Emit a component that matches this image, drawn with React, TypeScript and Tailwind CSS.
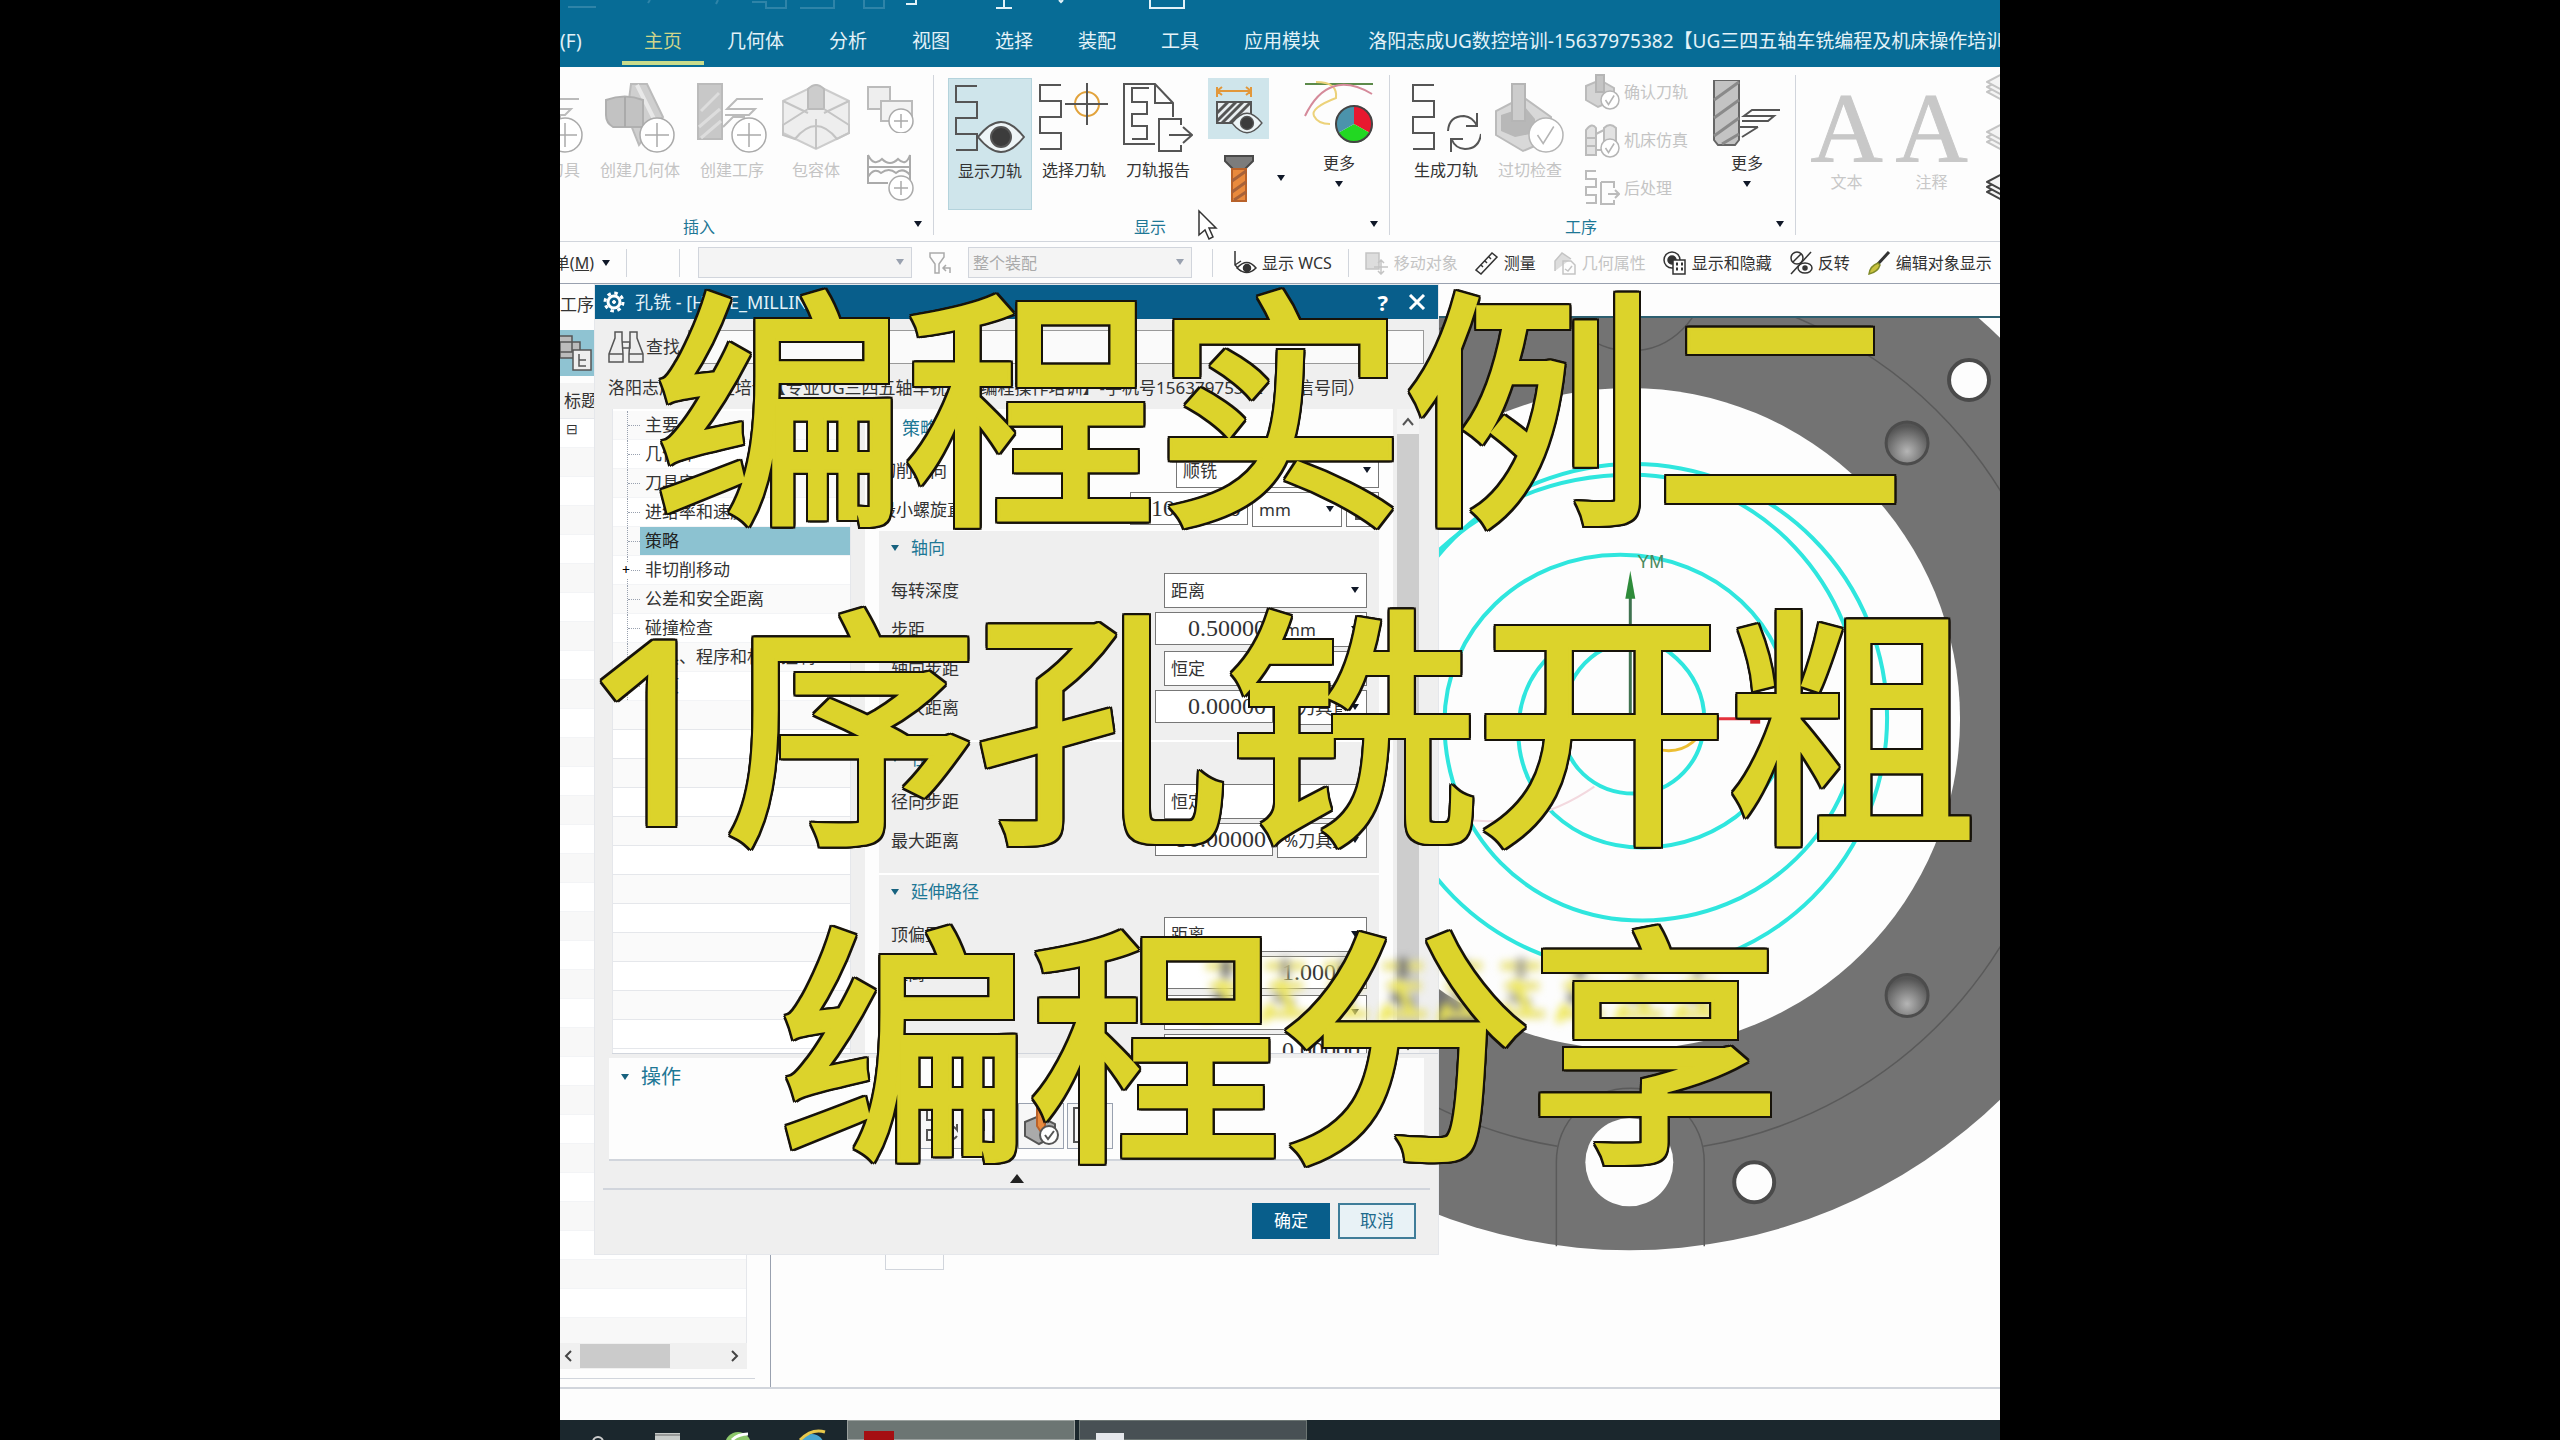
import { type ReactNode } from "react";

const tabs = ["几何体", "分析", "视图", "选择", "装配", "工具", "应用模块"];
const treeItems = ["主要", "几何体", "刀具安装", "进给率和速度", "策略", "非切削移动", "公差和安全距离", "碰撞检查", "刀具、程序和机床控制", "选项"];
const STEP = "M21 0H0V16H21V32H0V48H21V64H0";

/* ---------- 图标 ---------- */

function Icon({ w = 70, h = 70, children }: { w?: number; h?: number; children: ReactNode }) {
  return (
    <svg width={w} height={h} viewBox={`0 0 ${w} ${h}`} fill="none" stroke="#555" strokeWidth="2" className="shrink-0" aria-hidden="true">
      {children}
    </svg>
  );
}

function Down({ className = "text-gray-900" }: { className?: string }) {
  return (
    <svg width="8" height="6" viewBox="0 0 8 6" className={className} aria-hidden="true">
      <path d="M0 0H8L4 6Z" fill="currentColor" />
    </svg>
  );
}

function Plus({ x, y, r = 17 }: { x: number; y: number; r?: number }) {
  return (
    <g stroke="#aaa" strokeWidth="1.5">
      <circle cx={x} cy={y} r={r} fill="#fff" />
      <path d={`M${x - r + 5} ${y}h${2 * r - 10}M${x} ${y - r + 5}v${2 * r - 10}`} />
    </g>
  );
}

function Eye({ x, y, s = 1 }: { x: number; y: number; s?: number }) {
  return (
    <g transform={`translate(${x} ${y}) scale(${s})`}>
      <path d="M-23 0Q-11 -15 0 -15Q11 -15 23 0Q11 15 0 15Q-11 15 -23 0Z" fill="#eef5f7" stroke="#555" strokeWidth="2" />
      <circle r="10" fill="#3c3c3c" stroke="#555" />
    </g>
  );
}

function GeomIcon() {
  return (
    <Icon>
      <path d="M26 1H42L58 34L44 48L34 62L22 32Z" fill="#cfcfcf" stroke="#bbb" />
      <path d="M32 2L50 38" stroke="#e8e8e8" strokeWidth="4" />
      <path d="M1 17Q20 10 38 17V44H8Q1 40 1 32Z" fill="#c2c2c2" stroke="#b0b0b0" />
      <path d="M20 14V44" stroke="#aaa" />
      <Plus x={52} y={52} />
    </Icon>
  );
}

function OperationIcon() {
  return (
    <Icon>
      <path d="M1 1H25V56H1Z" fill="#c8c8c8" stroke="#bbb" />
      <path d="M4 28L22 10M2 44L23 26M4 55L24 38" stroke="#ddd" strokeWidth="3" />
      <path d="M66 16H40L30 26H58L52 32H28M48 34H36L26 44" stroke="#bbb" />
      <Plus x={52} y={52} />
    </Icon>
  );
}

function ContainIcon() {
  return (
    <Icon>
      <path d="M35 2L68 18V50L35 66L2 50V18Z" fill="#eee" stroke="#ccc" />
      <path d="M27 6Q35 -2 43 6V26H27Z" fill="#ccc" stroke="#bbb" />
      <path d="M27 26L2 42V52L14 56Q35 30 56 56L68 50V42L43 26M2 18L27 30M68 18L43 30M35 36V66" stroke="#c4c4c4" />
    </Icon>
  );
}

function StockIcon() {
  return (
    <Icon w={48} h={48}>
      <path d="M2 2H24V24H2Z" fill="#eee" stroke="#bbb" />
      <path d="M15 16H46V36H15Z" fill="#f2f2f2" stroke="#bbb" />
      <Plus x={35} y={36} r={12} />
    </Icon>
  );
}

function WaveIcon() {
  return (
    <Icon w={48} h={48}>
      <path d="M2 2Q8 14 16 6Q24 14 32 6Q40 14 44 2V30M2 2V30H22M2 24Q8 14 15 20Q23 14 30 20Q37 14 44 22M2 14H44" stroke="#aaa" />
      <Plus x={35} y={35} r={12} />
    </Icon>
  );
}

function ShowPathIcon() {
  return (
    <Icon>
      <path d={STEP} transform="translate(1 2)" />
      <Eye x={46} y={53} />
    </Icon>
  );
}

function SelectPathIcon() {
  return (
    <Icon>
      <path d={STEP} transform="translate(1 2)" />
      <circle cx="48" cy="21" r="12" stroke="#e2a33c" />
      <path d="M26 21H69M48 0V42" />
    </Icon>
  );
}

function ReportIcon() {
  return (
    <Icon>
      <path d="M32 61H1V1H32L50 20V34M32 1V20H50M26 5H9V19H24V31H9V43H24V56H9" />
      <path d="M58 42V36H36V68H58V62M46 52H69M60 44L69 52L60 60" />
    </Icon>
  );
}

function HatchIcon() {
  return (
    <Icon w={50} h={52}>
      <path d="M3 4V14M37 4V14M3 8H37M3 8l5 -4M3 8l5 4M37 8l-5 -4M37 8l-5 4" stroke="#e2973a" />
      <path d="M3 19H37V40H3Z" fill="#e9eef0" />
      <path d="M3 30L14 19M3 38L22 19M8 40L29 19M16 40L37 19" strokeWidth="3" />
      <Eye x={33} y={40} s={0.65} />
    </Icon>
  );
}

function ToolIcon() {
  return (
    <Icon w={30} h={48}>
      <path d="M1 1H29V6L21 14H9L1 6Z" fill="#7c7c7c" stroke="#4a4a4a" />
      <path d="M8 14H22V46H8Z" fill="#e98a3d" stroke="#b9622a" />
      <path d="M8 26L22 16M8 37L22 27M10 45L22 37" stroke="#a7623a" strokeWidth="3" />
    </Icon>
  );
}

function MoreViewIcon() {
  return (
    <Icon>
      <path d="M1 4H69" stroke="#5c8a4a" />
      <path d="M12 2Q34 2 32 18Q6 28 10 36Q14 44 26 44" stroke="#ecd27a" />
      <path d="M1 36Q24 -12 68 14" stroke="#d58a9a" />
      <path d="M50 44V26A18 18 0 0 1 66 53Z" fill="#e8182f" stroke="none" />
      <path d="M50 44L66 53A18 18 0 0 1 34 53Z" fill="#22d822" stroke="none" />
      <path d="M50 44L34 53A18 18 0 0 1 50 26Z" fill="#4b93ab" stroke="none" />
      <circle cx="50" cy="44" r="18" stroke="#444" />
    </Icon>
  );
}

function GenerateIcon() {
  return (
    <Icon>
      <path d={STEP} transform="translate(2 2)" />
      <path d="M37 48Q38 33 53 33Q62 34 66 43M66 30V43H55M70 51Q68 66 54 66Q44 65 41 57M40 69V56H52" />
    </Icon>
  );
}

function Check({ x, y, r }: { x: number; y: number; r: number }) {
  return (
    <g stroke="#b5b5b5" strokeWidth="1.5">
      <circle cx={x} cy={y} r={r} fill="#fff" />
      <path d={`M${x - r / 2} ${y}l${r / 3} ${r / 2}l${r / 1.6} ${-r}`} />
    </g>
  );
}

function GougeIcon() {
  return (
    <Icon>
      <path d="M28 14L56 34V56L28 68L1 52V28Z" fill="#d8d8d8" stroke="#bbb" />
      <path d="M6 32L30 24L40 36V50L20 54L6 48Z" fill="#b8b8b8" stroke="none" />
      <path d="M17 1H30V38H17Z" fill="#ccc" stroke="#b5b5b5" />
      <Check x={51} y={52} r={17} />
    </Icon>
  );
}

function VerifyIcon() {
  return (
    <Icon w={36} h={36}>
      <path d="M16 6L30 14V26L14 33L2 26V12Z" fill="#d4d4d4" stroke="#bbb" />
      <path d="M12 1H20V18H12Z" fill="#c4c4c4" stroke="#b5b5b5" />
      <Check x={26} y={26} r={9} />
    </Icon>
  );
}

function MachineIcon() {
  return (
    <Icon w={36} h={36}>
      <path d="M2 33V8Q8 0 12 6V33ZM20 22V6Q26 0 32 6V24M2 16H12M2 24H12M12 12L20 8M12 28H20" fill="#e2e2e2" stroke="#bbb" />
      <Check x={26} y={26} r={9} />
    </Icon>
  );
}

function PostIcon() {
  return (
    <Icon w={36} h={36}>
      <path d="M12 1H2V9H12V17H2V25H12V33H2M17 12H30V18M17 12V34H30V30M24 24H35M31 20L35 24L31 28" stroke="#bbb" />
    </Icon>
  );
}

function MillIcon() {
  return (
    <Icon>
      <path d="M2 0H27V60L23 65H6L2 60Z" fill="#c3c3c3" stroke="#666" />
      <path d="M2 20L27 2M2 38L27 20M2 56L27 38M10 64L27 54" stroke="#8a8a8a" strokeWidth="3" />
      <path d="M68 30H40L32 36H62L56 41H30M46 47H28M46 47L30 57" />
    </Icon>
  );
}

function Layers({ color }: { color: string }) {
  return (
    <svg width="44" height="34" viewBox="0 0 44 34" fill="#f4f4f4" stroke={color} strokeWidth="2" className="shrink-0" aria-hidden="true">
      <path d="M1 22L20 12L40 22L20 32Z" />
      <path d="M1 17L20 7L40 17L20 27Z" />
      <path d="M1 12L20 2L40 12L20 22Z" />
    </svg>
  );
}

/* ---------- 功能区 ---------- */

function RibbonButton({ icon, label, active, disabled, wide }: { icon: ReactNode; label: string; active?: boolean; disabled?: boolean; wide?: boolean }) {
  return (
    <button
      className={`flex h-[132px] shrink-0 flex-col items-center pt-[5px] ${wide ? "w-[100px]" : "w-[84px]"} ${
        active ? "border border-[#b4d3dc] bg-[#cfe5eb]" : ""
      } ${disabled ? "text-[#c4c4c4]" : "text-[#333]"}`}
    >
      <span className="flex h-[70px] items-center">{icon}</span>
      <span className="mt-[7px] text-base leading-5 whitespace-nowrap">{label}</span>
    </button>
  );
}

function MoreButton({ icon }: { icon: ReactNode }) {
  return (
    <button className="flex h-[132px] w-[84px] shrink-0 flex-col items-center pt-[2px] text-[#333]">
      {icon}
      <span className="mt-[3px] text-base leading-5">更多</span>
      <span className="mt-2">
        <Down />
      </span>
    </button>
  );
}

function RibbonGroup({ label, width, pad = "pr-6", children }: { label: string; width: string; pad?: string; children: ReactNode }) {
  return (
    <section className={`flex shrink-0 flex-col ${width}`}>
      <div className="flex h-[146px] pt-[11px]">{children}</div>
      <div className={`relative flex h-7 items-center justify-center text-base text-[#1d7795] ${pad}`}>
        {label}
        {label && (
          <span className="absolute top-2 right-3">
            <Down />
          </span>
        )}
      </div>
    </section>
  );
}

function Divider() {
  return <div className="-ml-px mt-2 h-[160px] w-px shrink-0 bg-gray-300" />;
}

function Ribbon() {
  return (
    <div className="flex h-[175px] shrink-0 overflow-hidden border-b border-gray-300 bg-[#fdfdfd]">
      <RibbonGroup label="插入" width="w-[374px]" pad="pr-24">
        <div className="flex w-full justify-end">
          <RibbonButton icon={<OperationIcon />} label="创建刀具" disabled />
          <RibbonButton icon={<GeomIcon />} label="创建几何体" disabled wide />
          <RibbonButton icon={<OperationIcon />} label="创建工序" disabled />
          <RibbonButton icon={<ContainIcon />} label="包容体" disabled />
          <div className="flex w-[76px] shrink-0 flex-col items-start gap-5 pl-2 pt-[7px]">
            <button aria-label="毛坯"><StockIcon /></button>
            <button aria-label="曲面"><WaveIcon /></button>
          </div>
        </div>
      </RibbonGroup>
      <Divider />
      <RibbonGroup label="显示" width="w-[456px]">
        <div className="flex w-full pl-[14px]">
          <RibbonButton icon={<ShowPathIcon />} label="显示刀轨" active />
          <RibbonButton icon={<SelectPathIcon />} label="选择刀轨" />
          <RibbonButton icon={<ReportIcon />} label="刀轨报告" />
          <div className="ml-2 flex w-[61px] flex-col items-center gap-4">
            <button aria-label="显示切削" className="flex h-[61px] w-full items-center justify-center bg-[#cfe5eb]"><HatchIcon /></button>
            <button aria-label="显示刀具"><ToolIcon /></button>
          </div>
          <div className="flex w-7 items-center justify-start pt-16 pl-2">
            <Down />
          </div>
          <MoreButton icon={<MoreViewIcon />} />
        </div>
      </RibbonGroup>
      <Divider />
      <RibbonGroup label="工序" width="w-[406px]">
        <div className="flex w-full pl-[14px]">
          <RibbonButton icon={<GenerateIcon />} label="生成刀轨" />
          <RibbonButton icon={<GougeIcon />} label="过切检查" disabled />
          <div className="-mt-1 ml-3 flex w-[121px] flex-col gap-3 text-base text-[#c4c4c4]">
            <button className="flex items-center gap-1"><VerifyIcon />确认刀轨</button>
            <button className="flex items-center gap-1"><MachineIcon />机床仿真</button>
            <button className="flex items-center gap-1"><PostIcon />后处理</button>
          </div>
          <MoreButton icon={<MillIcon />} />
        </div>
      </RibbonGroup>
      <Divider />
      <RibbonGroup label="" width="w-[230px]">
        <div className="flex pl-2">
          {["文本", "注释"].map((t) => (
            <button key={t} className="flex w-[85px] flex-col items-center pt-2 text-[#c8c8c8]">
              <span className="font-['Liberation_Serif'] text-[100px] leading-[86px] [-webkit-text-stroke:1px_#c8c8c8]">A</span>
              <span className="text-base leading-5">{t}</span>
            </button>
          ))}
          <div className="-mt-2 ml-3 flex flex-col gap-4">
            <Layers color="#c4c4c4" />
            <Layers color="#c4c4c4" />
            <Layers color="#444" />
          </div>
        </div>
      </RibbonGroup>
    </div>
  );
}

function Header() {
  return (
    <header className="h-[67px] shrink-0 overflow-hidden bg-[#076c96] text-[19px] whitespace-nowrap text-[#e3f2f8]">
      <div className="flex h-[10px] items-start">
        <svg width="640" height="10" viewBox="0 0 640 10" fill="none" stroke="#e3f2f8" strokeWidth="2" aria-hidden="true">
          <path d="M346 4H356V0M436 8H452M444 8V0M499 0L501 2L503 0M590 0V8H624V0" />
          <path d="M8 7H36M88 3L90 0M156 4L158 0M192 2H206V8H226V0M240 8H274V0M304 0V8H324V0" stroke="#2f84a8" />
        </svg>
      </div>
      <nav className="flex h-[55px]">
        <div className="flex h-full w-[62px] shrink-0 items-center pt-2">(F)</div>
        <button className="flex h-full shrink-0 items-center border-b-4 border-[#c9dc8b] px-[22px] pt-3 text-[#cfd58a]">主页</button>
        {tabs.map((t) => (
          <button key={t} className="ml-px flex h-full shrink-0 items-center px-[22px] pt-2">
            {t}
          </button>
        ))}
        <div className="flex h-full items-center pl-[26px] pt-2">洛阳志成UG数控培训-15637975382【UG三四五轴车铣编程及机床操作培训】</div>
      </nav>
    </header>
  );
}

/* ---------- 选择条 ---------- */

function ToolButton({ icon, label, disabled }: { icon: ReactNode; label: string; disabled?: boolean }) {
  return (
    <button className={`flex shrink-0 items-center gap-[5px] ${disabled ? "text-[#c4c4c4]" : "text-[#333]"}`}>
      <svg width="24" height="24" viewBox="0 0 24 24" fill="none" stroke="currentColor" strokeWidth="1.5" aria-hidden="true">
        {icon}
      </svg>
      {label}
    </button>
  );
}

function SelectionBar() {
  return (
    <div className="flex h-[42px] shrink-0 items-center overflow-hidden border-b border-gray-400 bg-[#fdfdfd] text-base whitespace-nowrap text-[#333]">
      <div className="flex w-[34px] shrink-0 justify-end">
        <span>菜单(<u>M</u>)</span>
      </div>
      <span className="ml-2"><Down /></span>
      <div className="ml-[16px] h-7 w-px shrink-0 bg-gray-300" />
      <div className="ml-[52px] h-7 w-px shrink-0 bg-gray-300" />
      <label className="relative ml-[18px] shrink-0">
        <select aria-label="类型过滤器" className="h-[31px] w-[214px] appearance-none border border-gray-300 bg-[#f4f4f4]" />
        <span className="absolute top-3 right-2"><Down className="text-gray-400" /></span>
      </label>
      <svg width="24" height="24" viewBox="0 0 24 24" fill="none" stroke="#aaa" strokeWidth="1.5" className="ml-4 shrink-0" aria-hidden="true">
        <path d="M2 2H16V6L11 13V22H7V13L2 6ZM22 22V17H15M18 14L15 17L18 20" />
      </svg>
      <label className="relative ml-4 shrink-0">
        <select aria-label="选择范围" className="h-[31px] w-[224px] appearance-none border border-gray-300 bg-[#f4f4f4] pl-1 text-[#aaa]">
          <option>整个装配</option>
        </select>
        <span className="absolute top-3 right-2"><Down className="text-gray-400" /></span>
      </label>
      <div className="mx-5 h-7 w-px shrink-0 bg-gray-300" />
      <ToolButton label="显示 WCS" icon={<><path d="M2 0V14L8 20M2 14L8 10" /><path d="M4 17Q14 6 23 17Q14 26 4 17Z" fill="#fff" /><circle cx="14" cy="17" r="3.5" fill="#333" /></>} />
      <div className="mx-4 h-7 w-px shrink-0 bg-gray-300" />
      <div className="flex gap-[17px]">
        <ToolButton disabled label="移动对象" icon={<><path d="M1 2H14V18H1Z" fill="#ddd" /><path d="M9 16H23M16 9V23M13 12L16 9L19 12M13 20L16 23L19 20" /></>} />
        <ToolButton label="测量" icon={<path d="M1 19L17 2L22 6L6 23ZM6 14l2 2M10 10l2 2M14 6l2 2" />} />
        <ToolButton disabled label="几何属性" icon={<><path d="M2 20V10L9 2L18 8" fill="#ddd" /><path d="M10 10H18L22 14V23H10ZM12 18l3 2 4-5" /></>} />
        <ToolButton label="显示和隐藏" icon={<><circle cx="9" cy="9" r="8" /><circle cx="9" cy="9" r="4" fill="#333" /><path d="M10 9H22V23H10Z" fill="#fff" /><path d="M13 13h2M18 13h2M13 18h2M18 18h2" strokeWidth="3" /></>} />
        <ToolButton label="反转" icon={<><path d="M22 1L2 23" /><circle cx="8" cy="7" r="6" /><path d="M4 11L12 3" /><ellipse cx="16" cy="17" rx="7" ry="5" /><circle cx="16" cy="17" r="2" fill="#333" /></>} />
        <ToolButton label="编辑对象显示" icon={<><path d="M22 1L10 14" strokeWidth="3" /><path d="M11 12Q3 15 2 23Q11 21 13 14Z" fill="#c9c23e" stroke="#7f8a2a" /></>} />
      </div>
    </div>
  );
}

/* ---------- 导航器和视图 ---------- */

function Navigator() {
  return (
    <aside className="flex w-[211px] shrink-0 flex-col overflow-hidden border-r border-gray-400 bg-[#fdfdfd]">
      <div className="flex h-[46px] items-center pb-1 text-[17px] text-[#333]">工序导航器</div>
      <div className="flex h-[46px] w-[187px] bg-[#8fc3d2]">
        <svg width="34" height="46" viewBox="0 0 34 46" fill="#eee" stroke="#555" strokeWidth="1.5" aria-hidden="true">
          <path d="M-4 6H12V22H-4ZM0 12H20V28H0Z" fill="#bbb" />
          <path d="M13 20H31V40H13Z" />
          <path d="M19 24V36H26M19 30H26" />
        </svg>
      </div>
      <div className="mt-[7px] flex h-9 w-[187px] items-center border-b border-gray-200 bg-[#f3f3f3] pl-1 text-[17px] text-[#333]">标题</div>
      <div className="min-h-0 w-[187px] flex-1 overflow-hidden border-r border-gray-200">
        {Array.from({ length: 32 }, (_, i) => (
          <div key={i} className="h-[29px] border-b border-gray-100 pl-[6px] text-sm text-[#333] odd:bg-white even:bg-[#f8f8f8]">
            {i === 0 && "⊟"}
          </div>
        ))}
      </div>
      <div className="flex h-[26px] w-[187px] shrink-0 items-center gap-1 bg-[#f0f0f0] px-1">
        <svg width="8" height="12" viewBox="0 0 8 12" fill="none" stroke="#444" strokeWidth="2" aria-hidden="true"><path d="M7 1L2 6L7 11" /></svg>
        <div className="ml-1 h-6 w-[90px] bg-[#cbcbcb]" />
        <svg width="8" height="12" viewBox="0 0 8 12" fill="none" stroke="#444" strokeWidth="2" className="ml-auto mr-1" aria-hidden="true"><path d="M1 1L6 6L1 11" /></svg>
      </div>
      <div className="h-[10px] w-[195px] shrink-0 border-b border-gray-300" />
      <div className="h-2 shrink-0" />
    </aside>
  );
}

function Viewport() {
  return (
    <div className="flex min-w-0 flex-1 flex-col bg-[#fdfdfd] pt-[32px]">
      <svg viewBox="770 317 1230 1071" preserveAspectRatio="xMinYMin slice" className="min-h-0 w-full flex-1 border-t-2 border-[#2d5f70]" fill="none" aria-label="零件视图">
        <defs>
          <radialGradient id="cone" cx="0.5" cy="0.7" r="0.6">
            <stop offset="0" stopColor="#b5b5b5" />
            <stop offset="1" stopColor="#555" />
          </radialGradient>
        </defs>
        <circle cx="1629" cy="718" r="532" fill="#737373" />
        <g stroke="#5a5a5a" strokeWidth="1.5">
          <path d="M1703 1146A434 434 0 0 0 1703 290M1557 1146A434 434 0 0 1 1557 290" />
          <path d="M1556 1246V1162A74 74 0 0 1 1704 1162V1246M1556 190V276A74 74 0 0 0 1704 276V190" />
        </g>
        <circle cx="1629" cy="718" r="331" fill="#fdfdfd" />
        <circle cx="1629" cy="1162" r="44" fill="#fdfdfd" />
        <g fill="#fdfdfd" stroke="#4a4a4a" strokeWidth="4">
          <circle cx="1969" cy="379" r="20" />
          <circle cx="1754" cy="1182" r="20" />
        </g>
        <g fill="url(#cone)" stroke="#4c4c4c" strokeWidth="3">
          <circle cx="1907" cy="442" r="21" />
          <circle cx="1907" cy="995" r="21" />
        </g>
        {/* 螺旋刀轨 */}
        <g stroke="#2fe6de" strokeWidth="4">
          <circle cx="1633" cy="717" r="254" />
          <path d="M1438 550Q1520 474 1632 474C1762 474 1860 590 1860 706C1860 826 1762 920 1642 920C1528 920 1444 832 1444 722C1444 630 1520 554 1620 554C1716 554 1790 626 1790 710C1790 788 1722 847 1642 847C1572 847 1518 796 1518 732C1518 676 1556 632 1609 632C1662 632 1704 672 1704 718C1704 762 1672 793 1634 793C1594 793 1562 764 1562 724C1562 672 1596 640 1640 640" />
        </g>
        <path d="M1457 818Q1530 830 1594 786" stroke="#f3d9df" strokeWidth="2" />
        <path d="M1632 720A37 36 0 0 0 1705 720" stroke="#ecbe32" strokeWidth="3" />
        <path d="M1630 718V594" stroke="#3f7350" strokeWidth="3" />
        <path d="M1630 570L1635 598H1625Z" fill="#2e8b3a" />
        <path d="M1630 718H1752" stroke="#e4323c" strokeWidth="3" />
        <path d="M1750 713h10v10h-10z" fill="#d3242c" />
        <path d="M1625 714h10v9h-10z" fill="#0a2a9a" />
        <text x="1637" y="567" fontSize="18" fill="#4b8a5c" className="font-['Liberation_Sans']">YM</text>
      </svg>
    </div>
  );
}

/* ---------- 孔铣对话框 ---------- */

function Combo({ label, value, width }: { label: string; value: string; width: string }) {
  return (
    <span className="relative flex shrink-0">
      <select aria-label={label} className={`h-[35px] appearance-none border border-[#777] bg-white pr-6 pl-[6px] text-[17px] text-[#333] ${width}`}>
        <option>{value}</option>
      </select>
      <span className="pointer-events-none absolute top-[14px] right-2"><Down /></span>
    </span>
  );
}

function NumberBox({ label, value, width }: { label: string; value: string; width: string }) {
  return (
    <input
      aria-label={label}
      defaultValue={value}
      className={`h-[33px] shrink-0 border border-[#777] bg-white px-[6px] text-right font-['Liberation_Serif'] text-2xl text-[#333] ${width}`}
    />
  );
}

function Row({ label, children }: { label: string; children: ReactNode }) {
  return (
    <div className="flex h-[39px] items-start justify-between gap-2 px-3">
      <span className="leading-[35px] text-[#333]">{label}</span>
      <div className="flex items-start gap-1">{children}</div>
    </div>
  );
}

function Section({ title, children }: { title: string; children: ReactNode }) {
  return (
    <section className="border-b-2 border-white bg-[#efefef] pb-[11px]">
      <h3 className="mb-2 flex h-[34px] items-center gap-3 pl-3 text-[#1d7795]">
        <Down className="text-[#17627f]" />
        {title}
      </h3>
      {children}
    </section>
  );
}

function HoleMillingDialog() {
  return (
    <div role="dialog" aria-label="孔铣" className="absolute top-0 left-[34px] w-[845px] border border-gray-200 bg-[#efefef] text-[17px] whitespace-nowrap">
      <div className="flex h-[34px] items-center bg-[#085e8b] pr-3 pl-2 text-lg text-[#e3f2f8]">
        <svg width="22" height="22" viewBox="0 0 22 22" fill="none" stroke="#fff" aria-hidden="true">
          <circle cx="11" cy="11" r="6" strokeWidth="3" />
          <circle cx="11" cy="11" r="9" strokeWidth="3" strokeDasharray="3.5 3.57" />
          <circle cx="11" cy="11" r="1.5" fill="#fff" />
        </svg>
        <span className="ml-[10px]">孔铣 - [HOLE_MILLING]</span>
        <button className="ml-auto text-[22px] font-bold text-white">?</button>
        <button aria-label="关闭" className="ml-5">
          <svg width="18" height="16" viewBox="0 0 18 16" stroke="#fff" strokeWidth="3" aria-hidden="true"><path d="M2 1L16 15M16 1L2 15" /></svg>
        </button>
      </div>
      <div className="flex h-[55px] items-center pr-[14px] pl-[13px]">
        <svg width="36" height="34" viewBox="0 0 36 34" fill="#eee" stroke="#555" strokeWidth="1.5" aria-hidden="true">
          <path d="M7 2H14V10L15 24V32H1V24L7 8ZM22 2H29V8L35 24V32H21V24L22 10ZM1 24H15M21 24H35M14 12H22V18H14" />
        </svg>
        <label htmlFor="find" className="ml-[2px] text-[#333]">查找</label>
        <input id="find" className="ml-2 h-[34px] min-w-0 flex-1 border border-[#999] bg-[#fafafa] px-2" />
      </div>
      <p className="h-[35px] overflow-hidden pl-[13px] leading-7 text-[#333]">洛阳志成UG数控培训【专业UG三四五轴车铣数控编程操作培训】-手机号15637975382（微信号同）</p>
      <div className="ml-[17px] flex h-[645px] overflow-hidden border-b border-gray-300">
        <ul className="w-[239px] shrink-0 border-x border-gray-200 bg-white pt-[2px]">
          {treeItems.map((t, i) => (
            <li key={t} className={`relative flex h-[29px] items-center border-b border-gray-100 ${i % 2 ? "bg-white" : "bg-[#fafafa]"}`}>
              <span className="ml-[14px] h-full shrink-0 border-l border-dotted border-gray-400" />
              <span className="w-3 shrink-0 border-t border-dotted border-gray-400" />
              {i === 5 && <span className="absolute left-[9px] bg-white text-sm leading-4">+</span>}
              <span className={`h-full flex-1 overflow-hidden pl-[5px] leading-7 ${i === 4 ? "bg-[#8cc2d1] text-[#222]" : "text-[#333]"}`}>{t}</span>
            </li>
          ))}
          {Array.from({ length: 12 }, (_, i) => (
            <li key={i} className="h-[29px] border-b border-gray-200 odd:bg-[#fafafa]" />
          ))}
        </ul>
        <div className="ml-[14px] w-[528px] shrink-0 bg-[#fdfdfd] pr-[14px] pl-[14px]">
          <h3 className="flex h-[38px] items-center gap-3 pl-[3px] text-lg text-[#1d7795]">
            <Down className="text-[#17627f]" />
            策略
          </h3>
          <div className="-mx-3 pt-[6px]">
            <Row label="切削方向"><Combo label="切削方向" value="顺铣" width="w-[203px]" /></Row>
            <Row label="最小螺旋直径">
              <NumberBox label="最小螺旋直径" value="10.00000" width="w-[118px]" />
              <Combo label="最小螺旋直径单位" value="mm" width="w-[90px]" />
              <button aria-label="公式" className="flex h-[35px] w-[33px] items-center justify-center border border-[#777] bg-white">
                <span className="h-5 w-4 border-2 border-[#555]" />
              </button>
            </Row>
          </div>
          <Section title="轴向">
            <Row label="每转深度"><Combo label="每转深度" value="距离" width="w-[203px]" /></Row>
            <Row label="步距"><NumberBox label="步距" value="0.50000" width="w-[118px]" /><Combo label="步距单位" value="mm" width="w-[90px]" /></Row>
            <Row label="轴向步距"><Combo label="轴向步距" value="恒定" width="w-[203px]" /></Row>
            <Row label="最大距离"><NumberBox label="轴向最大距离" value="0.00000" width="w-[118px]" /><Combo label="轴向最大距离单位" value="%刀具直径" width="w-[90px]" /></Row>
          </Section>
          <Section title="径向">
            <Row label="径向步距"><Combo label="径向步距" value="恒定" width="w-[203px]" /></Row>
            <Row label="最大距离"><NumberBox label="径向最大距离" value="50.00000" width="w-[118px]" /><Combo label="径向最大距离单位" value="%刀具直径" width="w-[90px]" /></Row>
          </Section>
          <Section title="延伸路径">
            <Row label="顶偏置"><Combo label="顶偏置" value="距离" width="w-[203px]" /></Row>
            <Row label="距离"><NumberBox label="顶距离" value="1.00000" width="w-[203px]" /></Row>
            <Row label="底偏置"><Combo label="底偏置" value="距离" width="w-[203px]" /></Row>
            <Row label="距离"><NumberBox label="底距离" value="0.00000" width="w-[203px]" /></Row>
          </Section>
        </div>
        <div className="ml-1 flex w-[22px] shrink-0 flex-col items-center bg-[#f4f4f4]">
          <svg width="22" height="25" viewBox="0 0 22 25" fill="none" stroke="#555" strokeWidth="2" aria-hidden="true"><path d="M6 16L11 10L16 16" /></svg>
          <div className="w-full flex-1 bg-[#cdcdcd]" />
          <svg width="22" height="14" viewBox="0 0 22 14" fill="none" stroke="#555" strokeWidth="2" aria-hidden="true"><path d="M6 4L11 10L16 4" /></svg>
        </div>
      </div>
      <div className="mx-[14px] mt-1 h-[103px] border-b-2 border-gray-300 bg-[#fdfdfd]">
        <h3 className="flex h-[38px] items-center gap-3 pl-3 text-xl text-[#1d7795]">
          <Down className="text-[#17627f]" />
          操作
        </h3>
        <div className="mt-[7px] flex justify-center gap-[3px]">
          {[0, 1, 2, 3].map((i) => (
            <button key={i} aria-label={["生成", "重播", "确认", "列表"][i]} className="flex h-[46px] w-[46px] items-center justify-center border border-gray-400 bg-[#f7f7f7]">
              <Icon w={40} h={40}>
                {i === 0 && <path d="M12 4H4V14H12V24H4V34H12M20 24Q28 16 34 24V18M34 30Q28 38 20 30V36" />}
                {i === 1 && <path d="M12 4H4V14H12V24H4V34H12M34 20Q20 20 22 34H34" />}
                {i === 2 && (
                  <>
                    <path d="M18 10L34 18V30L18 38L4 30V16Z" fill="#aaa" />
                    <path d="M16 0H24V20L20 26L16 20Z" fill="#e98a3d" stroke="#b9622a" />
                    <circle cx="28" cy="29" r="9" fill="#fff" />
                    <path d="M24 29L27 33L33 25" />
                  </>
                )}
                {i === 3 && <path d="M34 2H4V36H34M26 8H12V16H22V22H12V30H24" />}
              </Icon>
            </button>
          ))}
        </div>
      </div>
      <div className="mx-2 flex h-[29px] items-center justify-center border-b-2 border-gray-300 pt-2">
        <svg width="14" height="9" viewBox="0 0 14 9" aria-hidden="true"><path d="M7 0L14 9H0Z" fill="#222" /></svg>
      </div>
      <div className="flex h-[64px] justify-end gap-2 pt-[13px] pr-[22px] text-[17px]">
        <button className="h-9 w-[78px] bg-[#085e8b] text-white">确定</button>
        <button className="h-9 w-[78px] border-2 border-[#3f7d99] bg-[#e8f2f6] text-[#1d6a8c]">取消</button>
      </div>
    </div>
  );
}

/* ---------- 字幕 ---------- */

function Watermark() {
  const cells = [0, 1, 2, 3, 4, 5, 6, 7, 8];
  return (
    <svg width="550" height="90" viewBox="0 0 550 90" fill="none" className="absolute top-[944px] left-[632px] blur-[4px]" aria-hidden="true">
      {cells.map((i) => (
        <g key={i} transform={`translate(${i * 59 + 8} 8)`}>
          <path d="M6 14H46M10 34H44M4 62H50" stroke="#e8e070" strokeWidth="8" />
          <path d="M26 6V26M14 44L36 52" stroke={i % 3 === 0 ? "#777" : "#aaa796"} strokeWidth="9" />
          <path d="M20 28L34 62M12 52L4 70" stroke="#efe84e" strokeWidth="7" />
        </g>
      ))}
    </svg>
  );
}

function Caption() {
  return (
    <div className="pointer-events-none absolute inset-x-0 top-[249px] flex flex-col items-center text-[250px] leading-[318px] whitespace-nowrap text-[#dcd32b] [-webkit-text-stroke:6px_#dcd32b] [filter:drop-shadow(2px_0_0_#17130a)_drop-shadow(-2px_0_0_#17130a)_drop-shadow(0_2px_0_#17130a)_drop-shadow(0_-2px_0_#17130a)] [paint-order:stroke_fill]">
      <p>编程实例二</p>
      <p>1序孔铣开粗</p>
      <p>编程分享</p>
    </div>
  );
}

function Taskbar() {
  return (
    <footer className="flex h-5 shrink-0 overflow-hidden bg-[#1b272d]">
      <svg width="287" height="20" viewBox="0 0 287 20" fill="none" className="shrink-0" aria-hidden="true">
        <circle cx="38" cy="22" r="5" stroke="#ccc" strokeWidth="2" />
        <path d="M95 13H120V20H95Z" fill="#c8ccca" />
        <path d="M95 15H120" stroke="#666" />
        <circle cx="178" cy="25" r="13" fill="#8cc76a" />
        <path d="M172 20Q178 14 188 14" stroke="#fff" strokeWidth="3" />
        <circle cx="252" cy="26" r="12" fill="#4aa6cf" />
        <path d="M240 20Q252 8 265 12" stroke="#e8c84a" strokeWidth="3" />
      </svg>
      <button aria-label="NX" className="flex w-[228px] shrink-0 border border-[#9aa09e] bg-[#6c7573] pt-[10px] pl-4">
        <span className="h-3 w-[30px] bg-[#a50f12]" />
      </button>
      <button aria-label="文件夹" className="ml-1 flex w-[228px] shrink-0 border border-[#6c7573] bg-[#485054] pt-3 pl-4">
        <span className="h-3 w-[28px] bg-gray-200" />
      </button>
    </footer>
  );
}

export default function App() {
  return (
    <div className="flex min-h-screen justify-center bg-black">
      <main className="relative flex h-screen w-full max-w-[1440px] flex-col overflow-hidden bg-[#fdfdfd] font-['Noto_Sans','Noto_Sans_CJK_SC',sans-serif]">
        <Header />
        <Ribbon />
        <SelectionBar />
        <div className="relative flex min-h-0 flex-1 border-b-2 border-gray-300">
          <Navigator />
          <Viewport />
          <div className="absolute top-[970px] left-[325px] h-4 w-[59px] border border-t-0 border-gray-300" />
          <HoleMillingDialog />
        </div>
        <div className="h-[31px] shrink-0 bg-[#fdfdfd]" />
        <Taskbar />
        <svg width="22" height="32" viewBox="0 0 22 32" className="absolute top-[209px] left-[637px]" fill="#fff" stroke="#333" strokeWidth="1.5" aria-hidden="true">
          <path d="M2 2V26L8 21L12 30L16 28L12 19H19Z" />
        </svg>
        <Watermark />
        <Caption />
      </main>
    </div>
  );
}
